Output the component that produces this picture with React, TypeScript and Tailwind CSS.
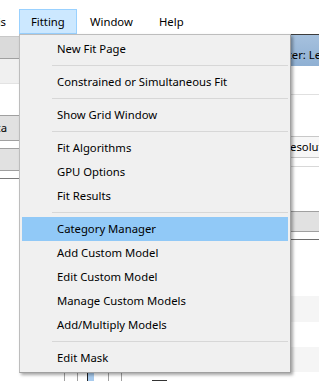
const menuItems: (string | null)[] = [
  'New Fit Page',
  null,
  'Constrained or Simultaneous Fit',
  null,
  'Show Grid Window',
  null,
  'Fit Algorithms',
  'GPU Options',
  'Fit Results',
  null,
  'Category Manager',
  'Add Custom Model',
  'Edit Custom Model',
  'Manage Custom Models',
  'Add/Multiply Models',
  null,
  'Edit Mask',
];

const HIGHLIGHT = 'Category Manager';

function MenuBar() {
  return (
    <div className="h-[34px] flex items-end bg-white leading-[25px]">
      <div className="w-[19px] h-[25px] shrink-0 flex justify-end overflow-hidden pr-[13px]">
        <span className="whitespace-nowrap">Analysis</span>
      </div>
      <div className="w-[58px] h-[25px] shrink-0 pl-[11px] bg-[#cce8ff] border border-[#99d1ff] leading-[23px]">
        Fitting
      </div>
      <div className="w-[69px] h-[25px] shrink-0 pl-[13px]">Window</div>
      <div className="h-[25px] shrink-0 pl-[13px]">Help</div>
    </div>
  );
}

function LeftPanel() {
  return (
    <div className="w-[200px] shrink-0 flex flex-col">
      <div className="h-[2px]" />
      <div className="h-[23px] bg-[#dadada] border-t border-b border-t-[#c8c8c8] border-b-[#a0a0a0]" />
      <div className="h-[25px] bg-[#f0f0f0] border-b border-[#e3e3e3]" />
      <div className="h-[31px]" />
      <div className="h-[26px] bg-[#e1e1e1] border-t border-b border-[#a0a0a0] leading-[24px]">
        <div className="w-[7px] overflow-hidden whitespace-nowrap flex justify-end">
          <span>Data</span>
        </div>
      </div>
      <div className="h-[7px]" />
      <div className="h-[23px] bg-[#e1e1e1] border-t border-b border-[#a0a0a0]" />
      <div className="h-[7px]" />
      <div className="h-px bg-[#7a7a7a]" />
      <div className="flex-1" />
      <div className="h-[9px] flex">
        <div className="w-[64px]" />
        <div className="w-[13px] border-l border-[#a0a0a0]" />
        <div className="w-[10px] border-l border-[#a0a0a0]" />
        <div className="w-[7px] border-l border-[#222222] bg-[#a8cbee]" />
        <div className="w-[14px]" />
        <div className="w-[13px] border-l border-[#a0a0a0]" />
        <div className="w-[31px] border-l border-[#a0a0a0]" />
        <div className="w-[15px] border-b border-[#333333]" />
      </div>
    </div>
  );
}

function RightPanel() {
  return (
    <div className="flex-1 flex flex-col">
      <div className="h-[32px] border-t border-[#3c3c3c] bg-gradient-to-b from-[#a6c1de] to-[#8fb0d3] pt-[9px] pl-[76px] leading-[22px] whitespace-nowrap overflow-hidden">
        Filter: Legend
      </div>
      <div className="h-[29px] border-b border-[#e0e0e0]" />
      <div className="h-[41px]" />
      <div className="h-[22px] bg-[#f7f7f7] border-t border-b border-[#c8c8c8] pl-[83px] leading-[20px] whitespace-nowrap overflow-hidden">
        Resolution
      </div>
      <div className="h-[9px] border-b border-[#d8d8d8]" />
      <div className="h-[44px]" />
      <div className="h-[21px] bg-[#e1e1e1] border-t border-b border-[#a0a0a0]" />
      <div className="h-[7px]" />
      <div className="h-px bg-[#6e6e6e]" />
      <div className="h-[56px]" />
      <div className="h-[26px] bg-[#f5f5f5]" />
      <div className="h-[25px]" />
      <div className="h-[25px] bg-[#f5f5f5]" />
      <div className="flex-1" />
    </div>
  );
}

function FittingMenu() {
  return (
    <div className="absolute left-[19px] top-[34px] w-[272px] bg-[#f0f0f0] border border-[#bdbdbd] border-r-[#a0a0a0] border-b-[#a0a0a0] p-[2px] shadow-[2px_2px_3px_rgba(0,0,0,0.35)]">
      {menuItems.map((item, i) =>
        item === null ? (
          <div key={i} className="h-[9px] flex items-center pl-[30px]">
            <div className="h-px w-full bg-[#d7d7d7]" />
          </div>
        ) : (
          <div
            key={i}
            className={`h-[24px] leading-[24px] pl-[35px] whitespace-nowrap ${
              item === HIGHLIGHT ? 'bg-[#91c9f7]' : ''
            }`}
          >
            {item}
          </div>
        )
      )}
    </div>
  );
}

export default function App() {
  return (
    <div className="relative w-[319px] h-[381px] overflow-hidden bg-white text-black text-[11.3px] font-['Noto_Sans',sans-serif]">
      <MenuBar />
      <div className="flex h-[347px]">
        <LeftPanel />
        <RightPanel />
      </div>
      <FittingMenu />
    </div>
  );
}
